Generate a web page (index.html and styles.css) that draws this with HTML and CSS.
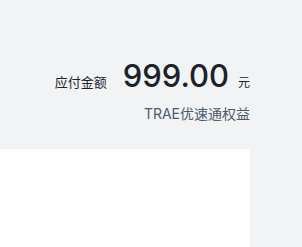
FILE: index.html
```html
<!DOCTYPE html>
<html lang="zh-CN">
<head>
    <meta charset="UTF-8">
    <meta name="viewport" content="width=device-width, initial-scale=1.0">
    <title>订单支付</title>
    <link rel="stylesheet" href="styles.css">
</head>
<body>

    <div class="checkout">
        <div class="summary">
            <div class="total">
                <span class="total-label">应付金额</span>
                <span class="total-amount">999.00</span>
                <span class="total-unit">元</span>
            </div>
            <div class="total-note">TRAE优速通权益</div>
        </div>
        <div class="panel"></div>
    </div>

</body>
</html>
```

FILE: styles.css
```css
body {
    font-family: Inter, "Noto Sans CJK SC", sans-serif;
    background-color: #f2f3f5;
    margin: 0;
    height: 100vh;
    overflow: hidden;
}

.checkout {
    padding-right: 52px;
}

.summary {
    display: flex;
    flex-direction: column;
    align-items: flex-end;
    padding-top: 57px;
}

.total {
    display: flex;
    align-items: baseline;
    color: #1d2129;
}

.total-label {
    font-size: 13px;
}

.total-amount {
    font-size: 31px;
    font-weight: 500;
    margin: 0 9px 0 16px;
}

.total-unit {
    font-size: 12px;
}

.total-note {
    margin-top: 9px;
    font-size: 14px;
    color: #4e5969;
}

.panel {
    background: #ffffff;
    border-radius: 4px;
    margin-top: 26px;
    margin-left: -10px;
    height: 200px;
}
```
